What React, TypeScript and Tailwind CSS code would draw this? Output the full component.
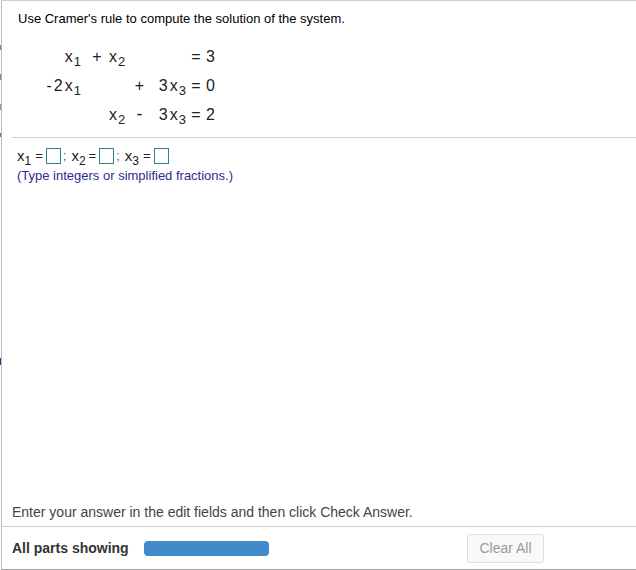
import React from "react"

function Sub({ children }: { children: React.ReactNode }) {
  return <span className="relative top-[4px] text-[12px]">{children}</span>
}

function Blank() {
  return <span className="inline-block w-[15px] h-[16px] border border-[#2b7f8e] bg-white" />
}

function Term({ coef, sub }: { coef?: string; sub: string }) {
  return (
    <>
      {coef && <span className="mr-[2px]">{coef}</span>}
      x
      <span className="relative top-[4px] ml-[1px] text-[13px]">{sub}</span>
    </>
  )
}

export default function App() {
  return (
    <div className="w-[636px] h-[570px] flex bg-white font-['Liberation_Sans',Arial,sans-serif] text-black overflow-hidden">
      {/* sliver of the neighbouring window */}
      <div className="w-px relative">
        <span className="absolute left-0 top-[45px] w-px h-[5px] bg-[#5b94c9]" />
        <span className="absolute left-0 top-[74px] w-px h-[6px] bg-[#5b94c9]" />
        <span className="absolute left-0 top-[104px] w-px h-[6px] bg-[#7e97ae]" />
        <span className="absolute left-0 top-[133px] w-px h-[4px] bg-[#8a6a4a]" />
        <span className="absolute left-0 top-[358px] w-px h-[7px] bg-[#2b3f8f]" />
      </div>

      <div className="flex-1 flex flex-col border-l border-l-[#b9b9b9] border-t border-t-[#ccd2db] border-b border-b-[#a3a3a3]">
        <div className="pl-[16px] pt-[10px] text-[13px] leading-[16px]">
          Use Cramer's rule to compute the solution of the system.
        </div>

        {/* equation system */}
        <div className="mt-[15px] ml-[42px] grid grid-cols-[41px_24px_18px_25px_34px_20px_12px] auto-rows-[29px] text-[16px] leading-[29px] text-[#222] whitespace-nowrap">
          <span className="text-right pr-[4px]"><Term sub="1" /></span>
          <span className="text-center">+</span>
          <span className="text-right pr-[4px]"><Term sub="2" /></span>
          <span />
          <span />
          <span className="text-center">=</span>
          <span>3</span>

          <span className="text-right pr-[4px]"><span className="mr-[2px]">-</span><Term coef="2" sub="1" /></span>
          <span />
          <span />
          <span className="text-center">+</span>
          <span className="text-right"><Term coef="3" sub="3" /></span>
          <span className="text-center">=</span>
          <span>0</span>

          <span />
          <span />
          <span className="text-right pr-[4px]"><Term sub="2" /></span>
          <span className="text-center text-[18px]">-</span>
          <span className="text-right"><Term coef="3" sub="3" /></span>
          <span className="text-center">=</span>
          <span>2</span>
        </div>

        <div className="mt-[8px] ml-[10px] border-t border-[#d2d2d2]" />

        {/* answer line */}
        <div className="mt-[10px] pl-[15px] flex items-center h-[16px] text-[15px] text-[#222] whitespace-nowrap">
          <span>x<Sub>1</Sub></span>
          <span className="ml-[4px] text-[13px]">=</span>
          <span className="ml-[3px] flex"><Blank /></span>
          <span className="ml-[2px] text-[13px] text-[#666]">;</span>
          <span className="ml-[5px]">x<Sub>2</Sub></span>
          <span className="ml-[3px] text-[13px]">=</span>
          <span className="ml-[3px] flex"><Blank /></span>
          <span className="ml-[2px] text-[13px] text-[#666]">;</span>
          <span className="ml-[5px]">x<Sub>3</Sub></span>
          <span className="ml-[4px] text-[13px]">=</span>
          <span className="ml-[3px] flex"><Blank /></span>
        </div>
        <div className="mt-[4px] pl-[15px] text-[13px] leading-[16px] text-[#2c2c8f]">
          (Type integers or simplified fractions.)
        </div>

        <div className="flex-1" />

        <div className="pl-[10px] pb-[4px] text-[14px] leading-[20px] text-[#444]">
          Enter your answer in the edit fields and then click Check Answer.
        </div>
        <div className="h-[43px] border-t border-[#cccccc] flex items-center pl-[10px]">
          <span className="text-[14px] font-bold text-[#333]">All parts showing</span>
          <span className="ml-[15px] w-[125px] h-[15px] rounded-[4px] bg-[#428bca]" />
          <button className="ml-auto mr-[92px] w-[77px] h-[29px] rounded-[3px] border border-[#dedede] bg-[#f9f9f9] text-[14px] text-[#9a9a9a]">
            Clear All
          </button>
        </div>
      </div>
    </div>
  )
}
